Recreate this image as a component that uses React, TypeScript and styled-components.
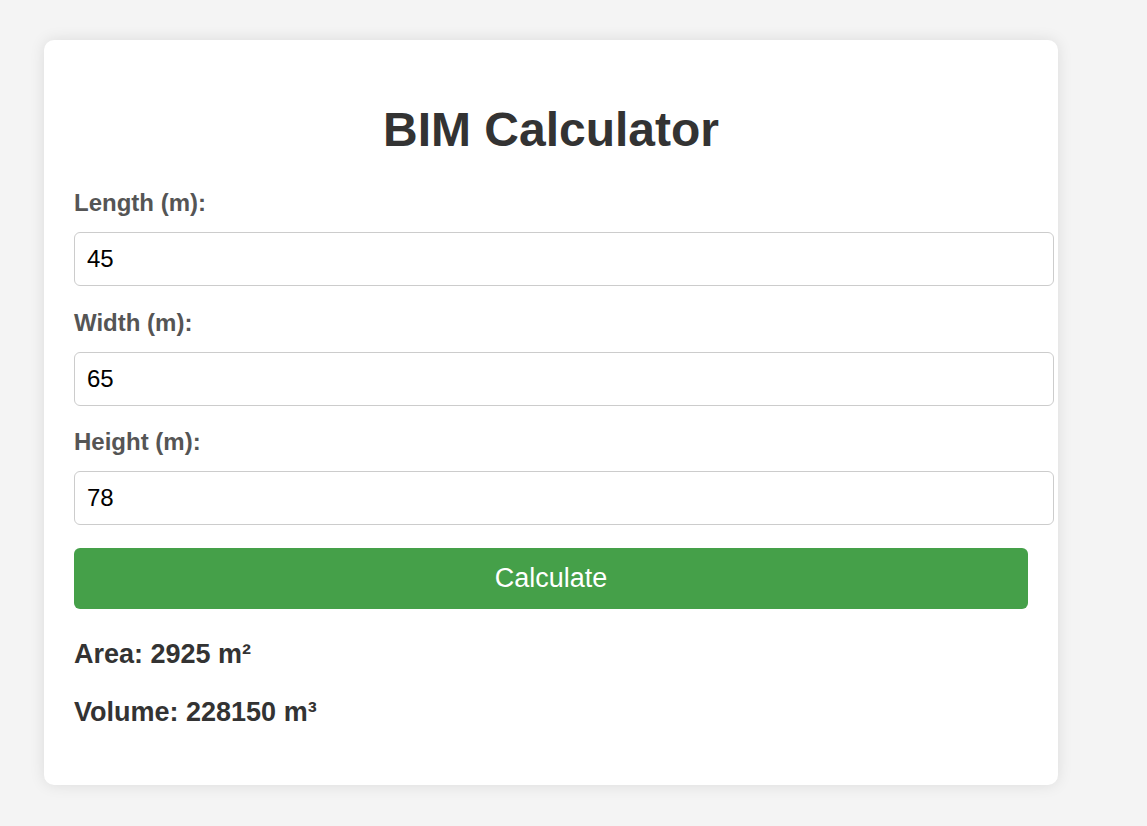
import React, { useState } from "react";
import styled, { createGlobalStyle } from "styled-components";

const GlobalStyle = createGlobalStyle`
    body {
        margin: 0;
        padding: 40px 0 40px 44px;
        background: #f4f4f4;
        font-family: "Liberation Sans", Arial, sans-serif;
    }
`;

const Card = styled.div`
    width: 954px;
    padding: 30px;
    background: #fff;
    border-radius: 10px;
    box-shadow: 0 0 15px rgba(0, 0, 0, 0.1);
`;

const Title = styled.h1`
    margin: 32px 0;
    text-align: center;
    color: #333;
    font-size: 48px;
    font-weight: bold;
`;

const Label = styled.label`
    display: block;
    margin-bottom: 15px;
    color: #555;
    font-size: 24px;
    font-weight: bold;
`;

const Input = styled.input`
    display: block;
    width: 100%;
    margin: 0 0 22.5px;
    padding: 12px;
    border: 1px solid #ccc;
    border-radius: 6px;
    color: #000;
    font-family: "Liberation Sans", Arial, sans-serif;
    font-size: 24px;
    outline: none;
`;

const Button = styled.button`
    display: block;
    width: 100%;
    padding: 15px;
    border: none;
    border-radius: 6px;
    background: #45a049;
    color: #fff;
    font-family: "Liberation Sans", Arial, sans-serif;
    font-size: 27px;
    cursor: pointer;
`;

const Result = styled.div`
    margin-top: 30px;
`;

const ResultLine = styled.p`
    margin: 27px 0;
    color: #333;
    font-size: 27px;
    font-weight: bold;

    &:first-child {
        margin-top: 0;
    }
`;

const fields = [
    { key: "length", label: "Length (m):" },
    { key: "width", label: "Width (m):" },
    { key: "height", label: "Height (m):" },
] as const;

type Dims = Record<(typeof fields)[number]["key"], string>;

export default function App() {
    const [dims, setDims] = useState<Dims>({ length: "45", width: "65", height: "78" });
    const [result, setResult] = useState({ area: 2925, volume: 228150 });

    const calculate = () => {
        const l = parseFloat(dims.length) || 0;
        const w = parseFloat(dims.width) || 0;
        const h = parseFloat(dims.height) || 0;
        setResult({ area: l * w, volume: l * w * h });
    };

    return (
        <>
            <GlobalStyle />
            <Card>
                <Title>BIM Calculator</Title>
                {fields.map((f) => (
                    <div key={f.key}>
                        <Label htmlFor={f.key}>{f.label}</Label>
                        <Input
                            id={f.key}
                            type="text"
                            value={dims[f.key]}
                            onChange={(e) => setDims({ ...dims, [f.key]: e.target.value })}
                        />
                    </div>
                ))}
                <Button onClick={calculate}>Calculate</Button>
                <Result>
                    <ResultLine>Area: {result.area} m²</ResultLine>
                    <ResultLine>Volume: {result.volume} m³</ResultLine>
                </Result>
            </Card>
        </>
    );
}
